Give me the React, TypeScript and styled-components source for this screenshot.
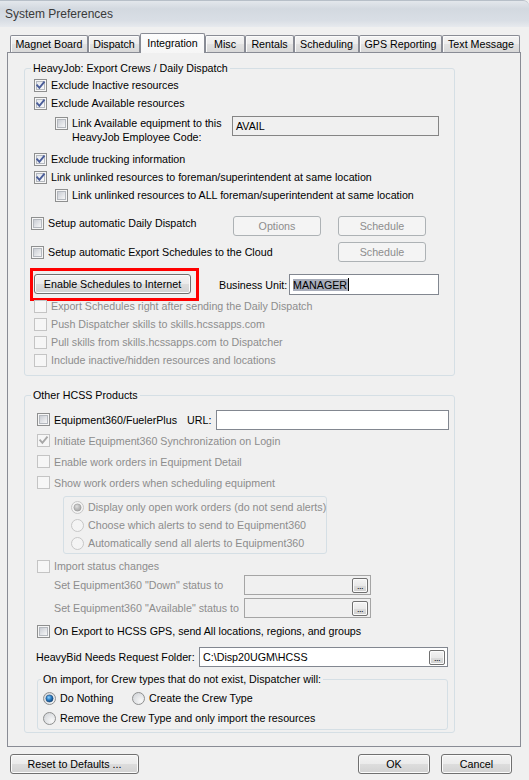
import React, { useId } from 'react';
import styled, { createGlobalStyle } from 'styled-components';

const GlobalStyle = createGlobalStyle`
  html, body {
    margin: 0;
    padding: 0;
    background: #f0f0f0;
  }
  body {
    font-family: "Liberation Sans", Arial, sans-serif;
    font-size: 10.7px;
    color: #000;
  }
`;

const Window = styled.div`
  width: 529px;
  height: 780px;
  background: #f0f0f0;
  display: flex;
  flex-direction: column;
  overflow: hidden;
`;

const TitleBar = styled.div`
  height: 27px;
  box-sizing: border-box;
  flex: none;
  display: flex;
  align-items: center;
  padding-left: 5px;
  border-top: 1px solid #b7bfc8;
  border-top-right-radius: 6px;
  background: linear-gradient(#e3e7ec 0%, #d3d9e0 30%, #d9dee5 75%, #e7eaee 100%);
`;

const Title = styled.span`
  font-size: 12px;
  color: #3a3a3a;
`;

const TabStrip = styled.div`
  display: flex;
  align-items: flex-end;
  height: 20px;
  margin: 6px 0 0 10px;
  position: relative;
  z-index: 1;
`;

const Tab = styled.div<{ $active?: boolean; $w: number }>`
  width: ${({ $w }) => $w}px;
  height: ${({ $active }) => ($active ? 20 : 17)}px;
  margin-bottom: ${({ $active }) => ($active ? 0 : 1)}px;
  box-sizing: border-box;
  border: 1px solid #898c95;
  border-bottom: 0;
  border-radius: 2px 2px 0 0;
  text-align: center;
  line-height: ${({ $active }) => ($active ? 18 : 16)}px;
  white-space: nowrap;
  background: ${({ $active }) =>
    $active
      ? 'linear-gradient(#fdfdfd, #f6f6f6)'
      : 'linear-gradient(#f4f4f4 0%, #ececec 50%, #e2e2e2 51%, #d8d8d8 100%)'};
  box-shadow: ${({ $active }) => ($active ? 'none' : 'inset 1px 1px 0 #fbfbfb')};
`;

const Panel = styled.div`
  width: 514px;
  height: 695px;
  box-sizing: border-box;
  margin: -1px 0 0 7px;
  border: 1px solid #898c95;
  padding: 9px 0 0 16px;
  background: #f0f0f0;
`;

const Group = styled.fieldset<{ $w: number; $mt?: number; $ml?: number }>`
  width: ${({ $w }) => $w}px;
  box-sizing: border-box;
  margin: ${({ $mt }) => $mt ?? 0}px 0 0 ${({ $ml }) => $ml ?? 0}px;
  padding: 0;
  min-width: 0;
  border: 1px solid #d5dfe5;
  border-radius: 3px;
`;

const Legend = styled.legend<{ $ml: number }>`
  margin-left: ${({ $ml }) => $ml}px;
  padding: 0 2px;
  line-height: 13px;
  font-size: 10.7px;
`;

const GroupBody = styled.div<{ $pad: string }>`
  padding: ${({ $pad }) => $pad};
`;

const Row = styled.div<{ $h: number; $mt?: number; $ml?: number; $mb?: number; $align?: string }>`
  display: flex;
  align-items: ${({ $align }) => $align ?? 'center'};
  height: ${({ $h }) => $h}px;
  margin: ${({ $mt }) => $mt ?? 0}px 0 ${({ $mb }) => $mb ?? 0}px ${({ $ml }) => $ml ?? 0}px;
`;

const CheckWrap = styled.span<{ $w?: number; $top?: boolean; $disabled?: boolean; $self?: string; $span?: string }>`
  display: inline-flex;
  align-items: ${({ $top }) => ($top ? 'flex-start' : 'center')};
  align-self: ${({ $self }) => $self ?? 'auto'};
  grid-column: ${({ $span }) => $span ?? 'auto'};
  gap: 4px;
  width: ${({ $w }) => ($w ? `${$w}px` : 'auto')};
  flex: none;
  line-height: 14px;
  white-space: nowrap;
  color: ${({ $disabled }) => ($disabled ? '#8d8d8d' : '#000')};

  svg {
    flex: none;
    margin-top: ${({ $top }) => ($top ? '1px' : '0')};
  }
`;

const Label = styled.span<{ $w?: number; $disabled?: boolean; $ml?: number }>`
  display: inline-block;
  flex: none;
  width: ${({ $w }) => ($w ? `${$w}px` : 'auto')};
  margin-left: ${({ $ml }) => $ml ?? 0}px;
  white-space: nowrap;
  line-height: 14px;
  color: ${({ $disabled }) => ($disabled ? '#8d8d8d' : '#000')};
`;

const Button = styled.button<{ $w: number }>`
  width: ${({ $w }) => $w}px;
  height: 20px;
  box-sizing: border-box;
  margin: 0;
  padding: 0;
  flex: none;
  font: 10.7px "Liberation Sans", Arial, sans-serif;
  color: #000;
  border: 1px solid #707070;
  border-radius: 3px;
  background: linear-gradient(#f3f3f3 0%, #ebebeb 50%, #dddddd 51%, #d2d2d2 100%);
  box-shadow: inset 0 0 0 1px #fbfbfb;

  &:disabled {
    color: #8d8d8d;
    border-color: #adb2b5;
    background: #f4f4f4;
    box-shadow: none;
  }
`;

const ScheduleGrid = styled.div`
  display: grid;
  grid-template-columns: 185px 88px 88px;
  grid-auto-rows: 20px;
  column-gap: 17px;
  row-gap: 6px;
  align-items: center;
  margin: 12px 0 0 -3px;
`;

const Highlight = styled.div`
  border: 3px solid #ff0000;
  padding: 3px 5px 4px 1px;
  display: flex;
`;

const TextBox = styled.div<{ $w: number; $h?: number; $bg?: string; $line?: string; $ml?: number }>`
  width: ${({ $w }) => $w}px;
  height: ${({ $h }) => $h ?? 20}px;
  box-sizing: border-box;
  flex: none;
  display: flex;
  align-items: center;
  margin-left: ${({ $ml }) => $ml ?? 0}px;
  padding: 0 2px 0 3px;
  border: 1px solid ${({ $line }) => $line ?? '#828790'};
  background: ${({ $bg }) => $bg ?? '#fff'};
  line-height: 14px;
  white-space: nowrap;
`;

const BoxText = styled.span`
  flex: 1;
`;

const Selected = styled.span`
  background: #a9aebb;
  padding: 0 1px 0 0;
`;

const Caret = styled.span`
  display: inline-block;
  width: 1px;
  height: 13px;
  background: #000;
  vertical-align: -2px;
`;

const Ellipsis = styled.span`
  width: 16px;
  height: 15px;
  box-sizing: border-box;
  flex: none;
  border: 1px solid #707070;
  border-radius: 2px;
  background: linear-gradient(#f4f4f4 0%, #e9e9e9 50%, #dcdcdc 51%, #d0d0d0 100%);
  box-shadow: inset 0 0 0 1px #fbfbfb;
  font-size: 9px;
  line-height: 15px;
  text-align: center;
  letter-spacing: -0.5px;
`;

const RadioBox = styled.div`
  display: flex;
  align-items: center;
`;

const Footer = styled.div`
  display: flex;
  justify-content: space-between;
  margin-top: 7px;
  padding: 0 17px 0 10px;
`;

const FooterRight = styled.div`
  display: flex;
  gap: 11px;
`;

/* ---------- glyphs ---------- */

const CheckGlyph: React.FC<{ checked?: boolean; disabled?: boolean }> = ({ checked, disabled }) => {
  const id = useId();
  return (
    <svg width="13" height="13" viewBox="0 0 13 13">
      <defs>
        <linearGradient id={id} x1="0" y1="0" x2="1" y2="1">
          <stop offset="0" stopColor={checked ? '#e2e6ee' : '#c6cad1'} />
          <stop offset="1" stopColor="#f9f9f9" />
        </linearGradient>
      </defs>
      <rect x="0.5" y="0.5" width="12" height="12" fill="#f6f6f6" stroke={disabled ? '#c4c4c4' : '#8e8f8f'} />
      {!disabled && <rect x="2.5" y="2.5" width="8" height="8" fill={`url(#${id})`} stroke="#b4b8be" />}
      {checked && (
        <path
          d="M3.2 6.4 L5.4 8.9 L9.9 3.4"
          fill="none"
          stroke={disabled ? '#a7a7a7' : '#4a5d99'}
          strokeWidth="1.9"
          strokeLinecap="square"
        />
      )}
    </svg>
  );
};

const RadioGlyph: React.FC<{ checked?: boolean; disabled?: boolean }> = ({ checked, disabled }) => {
  const id = useId();
  return (
    <svg width="13" height="13" viewBox="0 0 13 13">
      <defs>
        <radialGradient id={`${id}b`} cx="0.7" cy="0.7" r="0.8">
          <stop offset="0" stopColor="#f8f8f8" />
          <stop offset="1" stopColor="#d3d6da" />
        </radialGradient>
        <radialGradient id={`${id}d`} cx="0.4" cy="0.35" r="0.7">
          <stop offset="0" stopColor={disabled ? '#e0e0e0' : '#8fd2ff'} />
          <stop offset="0.5" stopColor={disabled ? '#bdbdbd' : '#2a7dc4'} />
          <stop offset="1" stopColor={disabled ? '#a5a5a5' : '#0f3d6e'} />
        </radialGradient>
      </defs>
      <circle
        cx="6.5"
        cy="6.5"
        r="6"
        fill={disabled ? '#f4f4f4' : `url(#${id}b)`}
        stroke={disabled ? '#c6c6c6' : '#8e8f8f'}
      />
      {checked && <circle cx="6.5" cy="6.5" r="3.6" fill={`url(#${id}d)`} stroke={disabled ? '#999' : '#1d4e80'} strokeWidth="0.6" />}
    </svg>
  );
};

interface CheckProps {
  checked?: boolean;
  disabled?: boolean;
  w?: number;
  top?: boolean;
  self?: string;
  span?: string;
  children: React.ReactNode;
}

const Check: React.FC<CheckProps> = ({ checked, disabled, w, top, self, span, children }) => (
  <CheckWrap $w={w} $top={top} $disabled={disabled} $self={self} $span={span}>
    <CheckGlyph checked={checked} disabled={disabled} />
    <span>{children}</span>
  </CheckWrap>
);

const Radio: React.FC<{ checked?: boolean; disabled?: boolean; w?: number; children: React.ReactNode }> = ({
  checked,
  disabled,
  w,
  children,
}) => (
  <CheckWrap $w={w} $disabled={disabled}>
    <RadioGlyph checked={checked} disabled={disabled} />
    <span>{children}</span>
  </CheckWrap>
);

const TABS = [
  { label: 'Magnet Board', w: 78 },
  { label: 'Dispatch', w: 52 },
  { label: 'Integration', w: 65, active: true },
  { label: 'Misc', w: 40 },
  { label: 'Rentals', w: 49 },
  { label: 'Scheduling', w: 65 },
  { label: 'GPS Reporting', w: 83 },
  { label: 'Text Message', w: 78 },
];

const App: React.FC = () => (
  <>
    <GlobalStyle />
    <Window>
      <TitleBar>
        <Title>System Preferences</Title>
      </TitleBar>

      <TabStrip>
        {TABS.map((t) => (
          <Tab key={t.label} $w={t.w} $active={t.active}>
            {t.label}
          </Tab>
        ))}
      </TabStrip>

      <Panel>
        <Group $w={431}>
          <Legend $ml={6}>HeavyJob: Export Crews / Daily Dispatch</Legend>
          <GroupBody $pad="1px 14px 6px 9px">
            <Row $h={18}>
              <Check checked>Exclude Inactive resources</Check>
            </Row>
            <Row $h={18}>
              <Check checked>Exclude Available resources</Check>
            </Row>
            <Row $h={38} $ml={21} $align="flex-start">
              <Row $h={34} $mt={4} $align="flex-start">
                <Check top w={177}>
                  Link Available equipment to this
                  <br />
                  HeavyJob Employee Code:
                </Check>
                <TextBox $w={207} $bg="#f0f0f0" $line="#858585">
                  AVAIL
                </TextBox>
              </Row>
            </Row>
            <Row $h={18}>
              <Check checked>Exclude trucking information</Check>
            </Row>
            <Row $h={18}>
              <Check checked>Link unlinked resources to foreman/superintendent at same location</Check>
            </Row>
            <Row $h={18} $ml={21}>
              <Check>Link unlinked resources to ALL foreman/superintendent at same location</Check>
            </Row>

            <ScheduleGrid>
              <Check self="start">Setup automatic Daily Dispatch</Check>
              <Button $w={88} disabled>
                Options
              </Button>
              <Button $w={88} disabled>
                Schedule
              </Button>
              <Check span="1 / 3">Setup automatic Export Schedules to the Cloud</Check>
              <Button $w={88} disabled>
                Schedule
              </Button>
            </ScheduleGrid>

            <Row $h={33} $mt={6} $mb={-4} $ml={-4}>
              <Highlight>
                <Button $w={157}>Enable Schedules to Internet</Button>
              </Highlight>
              <Label $w={66} $ml={20}>Business Unit:</Label>
              <TextBox $w={150} $h={21} $ml={4}>
                <BoxText>
                  <Selected>MANAGER</Selected>
                  <Caret />
                </BoxText>
              </TextBox>
            </Row>
            <Row $h={18}>
              <Check disabled>Export Schedules right after sending the Daily Dispatch</Check>
            </Row>
            <Row $h={18}>
              <Check disabled>Push Dispatcher skills to skills.hcssapps.com</Check>
            </Row>
            <Row $h={18}>
              <Check disabled>Pull skills from skills.hcssapps.com to Dispatcher</Check>
            </Row>
            <Row $h={18}>
              <Check disabled>Include inactive/hidden resources and locations</Check>
            </Row>
          </GroupBody>
        </Group>

        <Group $w={431} $mt={13}>
          <Legend $ml={6}>Other HCSS Products</Legend>
          <GroupBody $pad="7px 4px 2px 12px">
            <Row $h={21}>
              <Check w={150}>Equipment360/FuelerPlus</Check>
              <Label $w={29}>URL:</Label>
              <TextBox $w={233} />
            </Row>
            <Row $h={21}>
              <Check checked disabled>
                Initiate Equipment360 Synchronization on Login
              </Check>
            </Row>
            <Row $h={21}>
              <Check disabled>Enable work orders in Equipment Detail</Check>
            </Row>
            <Row $h={21}>
              <Check disabled>Show work orders when scheduling equipment</Check>
            </Row>

            <Group $w={264} $mt={3} $ml={26}>
              <GroupBody $pad="1px 7px 1px">
                <Row $h={18}>
                  <Radio checked disabled>
                    Display only open work orders (do not send alerts)
                  </Radio>
                </Row>
                <Row $h={18}>
                  <Radio disabled>Choose which alerts to send to Equipment360</Radio>
                </Row>
                <Row $h={18}>
                  <Radio disabled>Automatically send all alerts to Equipment360</Radio>
                </Row>
              </GroupBody>
            </Group>

            <Row $h={18} $mt={3}>
              <Check disabled>Import status changes</Check>
            </Row>
            <Row $h={20} $ml={17}>
              <Label $w={190} $disabled>
                Set Equipment360 "Down" status to
              </Label>
              <TextBox $w={127} $bg="#f0f0f0" $line="#a5a5a5">
                <BoxText />
                <Ellipsis>...</Ellipsis>
              </TextBox>
            </Row>
            <Row $h={20} $mt={3} $ml={17}>
              <Label $w={190} $disabled>
                Set Equipment360 "Available" status to
              </Label>
              <TextBox $w={127} $bg="#f0f0f0" $line="#a5a5a5">
                <BoxText />
                <Ellipsis>...</Ellipsis>
              </TextBox>
            </Row>
            <Row $h={18} $mt={4}>
              <Check>On Export to HCSS GPS, send All locations, regions, and groups</Check>
            </Row>
            <Row $h={20} $mt={7} $ml={-1}>
              <Label $w={163}>HeavyBid Needs Request Folder:</Label>
              <TextBox $w={249}>
                <BoxText>{'C:\\Disp20UGM\\HCSS'}</BoxText>
                <Ellipsis>...</Ellipsis>
              </TextBox>
            </Row>

            <Group $w={411} $mt={6}>
              <Legend $ml={3}>On import, for Crew types that do not exist, Dispatcher will:</Legend>
              <GroupBody $pad="2px 5px 1px">
                <Row $h={20}>
                  <RadioBox>
                    <Radio checked w={89}>
                      Do Nothing
                    </Radio>
                    <Radio>Create the Crew Type</Radio>
                  </RadioBox>
                </Row>
                <Row $h={20}>
                  <Radio>Remove the Crew Type and only import the resources</Radio>
                </Row>
              </GroupBody>
            </Group>
          </GroupBody>
        </Group>
      </Panel>

      <Footer>
        <Button $w={129}>Reset to Defaults ...</Button>
        <FooterRight>
          <Button $w={72}>OK</Button>
          <Button $w={71}>Cancel</Button>
        </FooterRight>
      </Footer>
    </Window>
  </>
);

export default App;
